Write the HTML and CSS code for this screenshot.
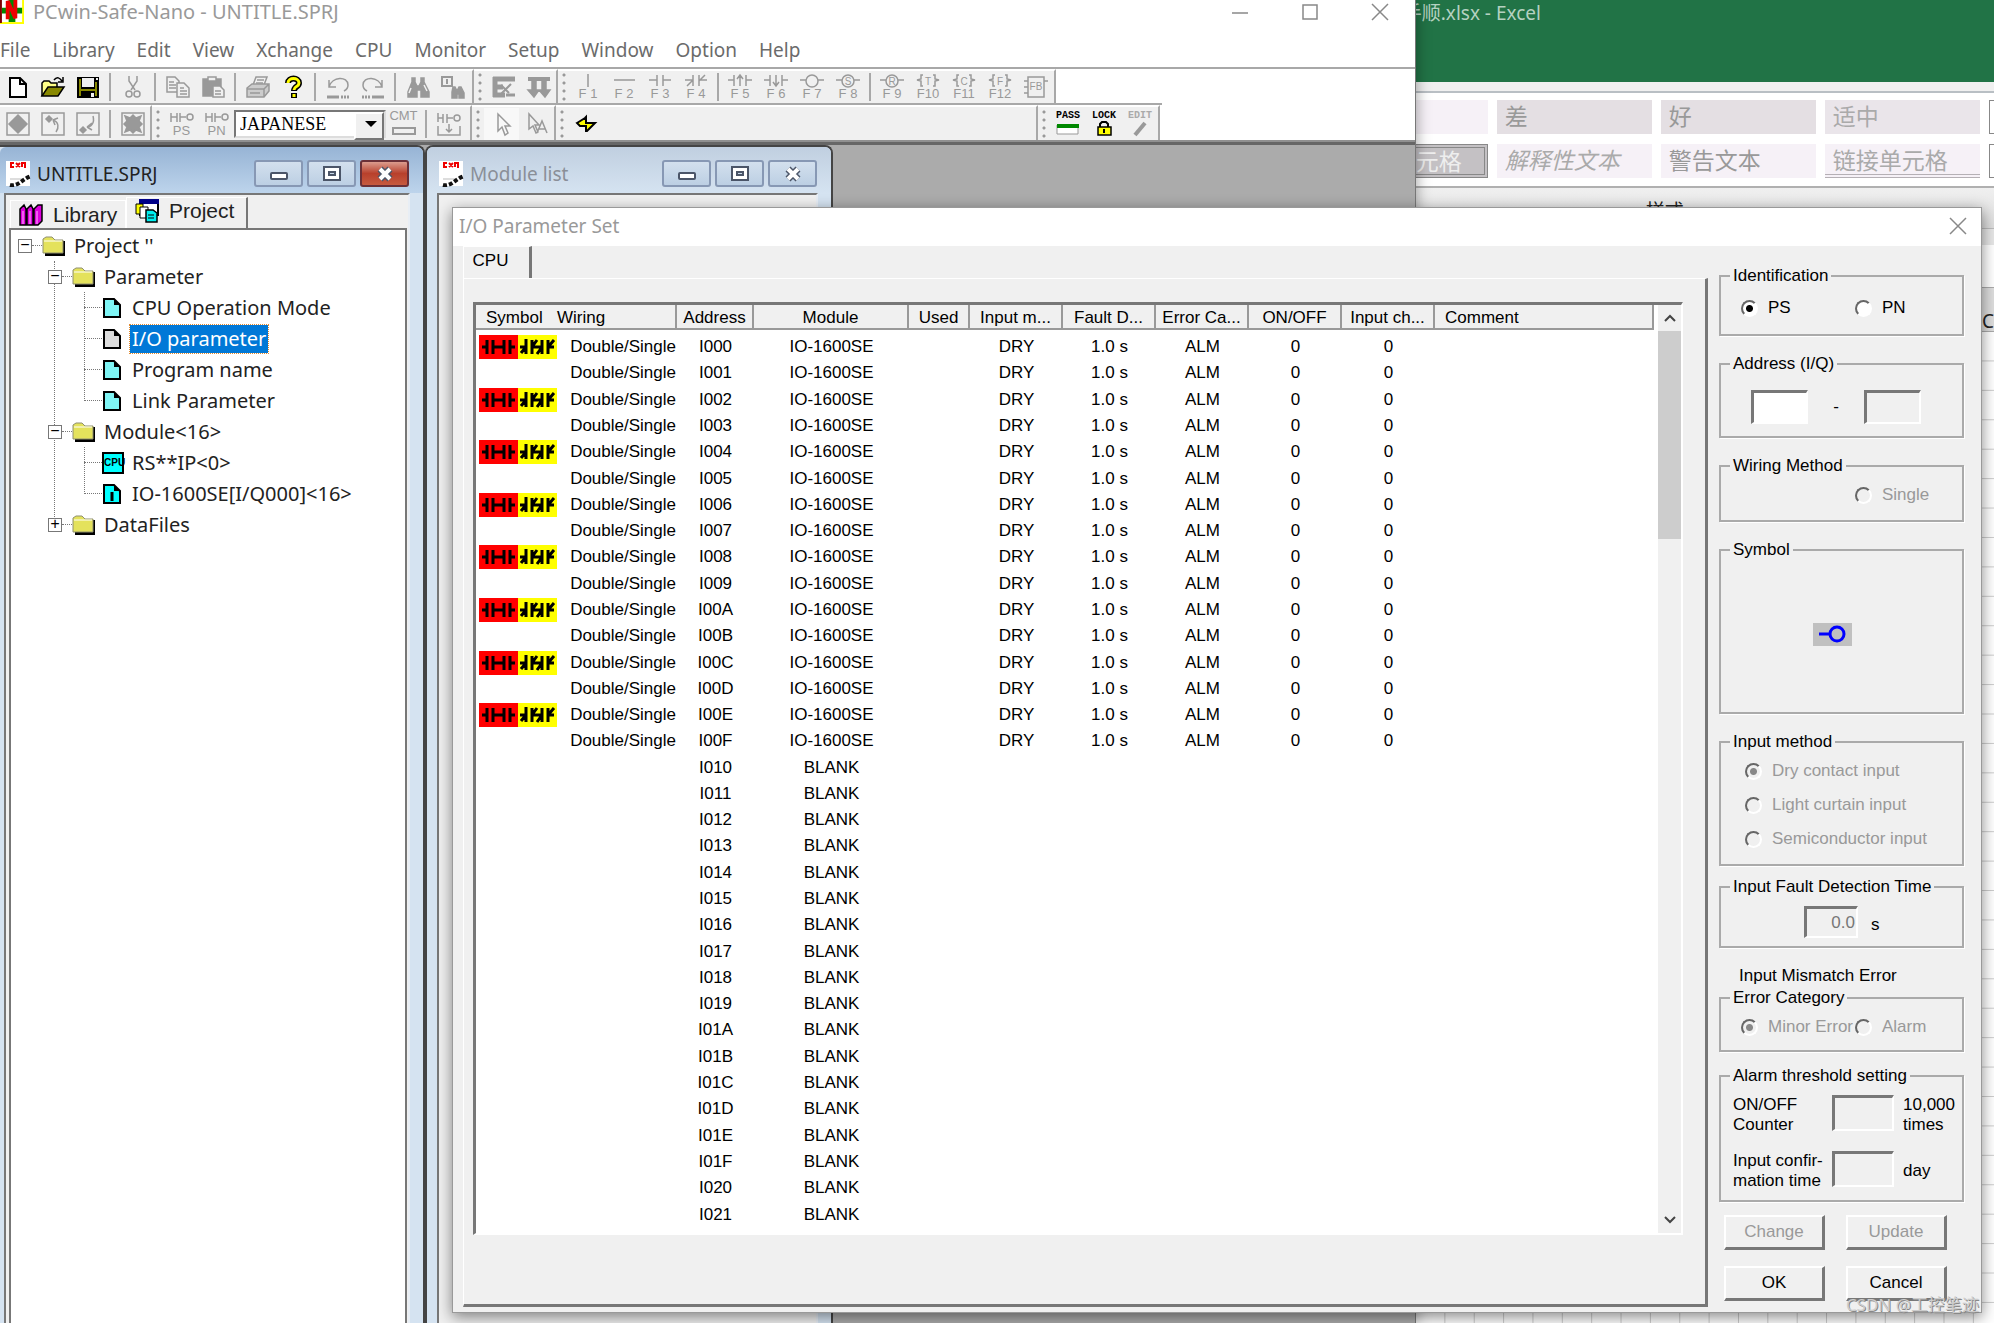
FILE: index.html
```html
<!DOCTYPE html>
<html lang="en">
<head>
<meta charset="utf-8">
<title>PCwin-Safe-Nano - UNTITLE.SPRJ</title>
<link rel="stylesheet" href="styles.css">
</head>
<body>
<svg class="defs" aria-hidden="true">
  <symbol id="doc-frame" viewBox="0 0 26 26"><path fill="#fff" d="M0 0h24v25H0z"/><path fill="none" stroke="#e00" stroke-width="2" d="M8 2H5v4h3M10 2l4 4M14 2l-4 4M19 1v6M19 2h-3v4"/><path stroke="#bbb" d="M4 18h12"/><path fill="none" stroke="#111" stroke-width="4" stroke-dasharray="4 2" d="M4 24c8 2 12-6 21-9"/></symbol>
  <symbol id="i-min" viewBox="0 0 20 16"><rect x="2" y="7" width="16" height="6" rx="1" fill="#fff" stroke="#4b5568" stroke-width="2"/></symbol>
  <symbol id="i-max" viewBox="0 0 20 16"><path fill="#fff" fill-rule="evenodd" stroke="#4b5568" stroke-width="2" d="M2 1h16v13H2zM7 6h6v3H7z"/></symbol>
  <symbol id="i-close" viewBox="0 0 20 16"><path stroke="#4b5568" stroke-width="7" d="M5 3l10 10M15 3L5 13"/><path stroke="#fff" stroke-width="4" d="M5 3l10 10M15 3L5 13"/></symbol>
  <symbol id="i-folder" viewBox="0 0 24 20"><path fill="#000" d="M3 5h20v15H3z"/><path fill="#e4e25c" stroke="#8f8f70" stroke-width="1" d="M1 17V3l3-2h6l3 3h8v13z"/><path stroke="#fff" d="M2 5h18"/></symbol>
  <symbol id="i-page" viewBox="0 0 18 20"><path fill="currentColor" stroke="#000" stroke-width="2" d="M1 1h10l6 6v12H1z"/><path fill="#000" d="M11 1v6h6z"/></symbol>
  <symbol id="i-contact" viewBox="0 0 78 24"><path fill="#f00" d="M0 0h39v24H0z"/><path fill="#ff0" d="M39 0h39v24H39z"/><path stroke="#000" stroke-width="3" d="M3 12h5M8 5v14M14 5v14M14 12h11M25 5v14M31 5v14M31 12h5M41 12h6M47 4v15M53 5v14M53 12h10M63 5v14M69 5v14M69 12h6M53 12l5-7M69 12l6-7M42 18l5-6M58 19l5-7"/></symbol>
</svg>
<div class="desktop">
  <main class="app">
    <header class="titlebar">
      <svg class="app-icon" viewBox="0 0 25 25"><path fill="#ff0" d="M0 0h25v25H0z"/><path fill="#fff" d="M1 0h22v23H1z"/><path fill="#080" d="M9 0h7v23H9zM2 8h21v6H2z"/><path fill="none" stroke="#e00" stroke-width="4" d="M8 20V1l8 18V0"/><path fill="#800000" d="M0 0h2v24H0z"/></svg>
      <h1>PCwin-Safe-Nano - UNTITLE.SPRJ</h1>
      <div class="caption-buttons">
        <button aria-label="Minimize"><svg viewBox="0 0 18 18"><path d="M1 10h16"/></svg></button>
        <button aria-label="Maximize"><svg viewBox="0 0 18 18"><path d="M2 2h14v14H2z"/></svg></button>
        <button aria-label="Close"><svg viewBox="0 0 18 18"><path d="M1 1l16 16M17 1L1 17"/></svg></button>
      </div>
    </header>
    <nav class="menu">
      <a href="#">File</a><a href="#">Library</a><a href="#">Edit</a><a href="#">View</a><a href="#">Xchange</a><a href="#">CPU</a><a href="#">Monitor</a><a href="#">Setup</a><a href="#">Window</a><a href="#">Option</a><a href="#">Help</a>
    </nav>
    <div class="toolrow">
      <div class="tools first">
        <button aria-label="New"><svg viewBox="0 0 24 24"><path fill="#fff" stroke="#000" stroke-width="2" d="M4 3h10l6 6v13H4zM14 3v6h6"/></svg></button>
        <button aria-label="Open"><svg viewBox="0 0 24 24"><path fill="#ff8" stroke="#000" stroke-width="1.500" d="M1 21V8l2-2h5l2 2h6v4"/><path fill="#880" stroke="#000" stroke-width="1.500" d="M1 21l6-9h16l-6 9z"/><path fill="none" stroke="#000" stroke-width="1.500" d="M13 5c3-4 6-2 8 1M22 2v5h-5"/></svg></button>
        <button aria-label="Save"><svg viewBox="0 0 24 24"><path fill="#000" d="M1 2h22v21H1z"/><path fill="#880" d="M3 4h2v17H3zM19 7h2v14h-2zM5 14h14v2H5z"/><path fill="#f0f0f0" d="M6 3h12v9H6zM15 18h3v4h-3zM20 3h2v2h-2z"/></svg></button>
        <i class="sep"></i>
        <button class="g" aria-label="Cut"><svg viewBox="0 0 24 24"><path d="M8 1v5l6 9M16 1v5l-6 9"/><circle cx="8" cy="19" r="3"/><circle cx="16" cy="19" r="3"/></svg></button>
        <i class="sep"></i>
        <button class="g" aria-label="Copy"><svg viewBox="0 0 24 24"><path d="M1 2h8l4 4v11H1zM3 7h5M3 10h7M3 13h7"/><path fill="#f0f0f0" d="M11 8h7l5 5v9H11zM14 13h4M14 16h7M14 19h7"/></svg></button>
        <button class="g" aria-label="Paste"><svg viewBox="0 0 24 24"><path fill="#999" d="M2 4h18v17H2z"/><path fill="#f0f0f0" d="M7 2h8v4H7zM12 11h7l4 4v7H12zM14 16h6M14 19h6"/></svg></button>
        <i class="sep"></i>
        <button class="g" aria-label="Print"><svg viewBox="0 0 24 24"><path d="M7 10l3-8h11l-3 8M11 5h7M10 8h7"/><path fill="#ccc" d="M1 13l5-4h17v7l-5 6H1zM1 14h17v8M18 14l5-5"/><path d="M4 18h10"/></svg></button>
        <button aria-label="Help"><svg viewBox="0 0 24 24"><path fill="none" stroke="#000" stroke-width="6" d="M7 8c0-6 11-6 11 0 0 4-5 3-5 8M13 18v5"/><path fill="none" stroke="#ff0" stroke-width="3" d="M7 8c0-6 11-6 11 0 0 4-5 3-5 7M13 19v3"/></svg></button>
        <i class="sep"></i>
        <button class="g" aria-label="Undo"><svg viewBox="0 0 24 24"><path d="M3 5v7h7M3 12C6 1 22 1 22 10c0 4-2 5-4 6"/><path stroke-width="3" d="M1 22h12m2 0h2m1 0h2m1 0h2"/></svg></button>
        <button class="g" aria-label="Redo"><svg viewBox="0 0 24 24"><path d="M21 5v7h-7M21 12C18 1 2 1 2 10c0 4 2 5 4 6"/><path stroke-width="3" d="M23 22H11m-2 0H7m-1 0H4m-1 0H1"/></svg></button>
        <i class="sep"></i>
        <button class="g" aria-label="Find"><svg viewBox="0 0 24 24"><path fill="#999" d="M6 3h3v4l2 4h2l2-4V3h3v4l5 10v5h-8v-7h-4v7H2v-5L6 7z"/><path stroke="#f0f0f0" d="M5 13l-2 5M18 10l3 6"/></svg></button>
        <button class="g" aria-label="Find next"><svg viewBox="0 0 24 24"><path stroke-width="2" d="M1 2h10v9H1zM6 4v5"/><path fill="#999" d="M12 12h2l2 4 2-4h2l3 6v5h-5v-4h-2v4h-5v-6z"/></svg></button>
      </div>
      <div class="tools">
        <i class="grip"></i>
        <button class="g" aria-label="Upload"><svg viewBox="0 0 24 24"><path stroke-width="5" d="M1 4h22M1 12h10M1 20h12M3 2v20"/><path stroke-width="3" d="M14 20h9"/><path stroke-width="2" d="M9 10l8 8M19 9L8 20"/></svg></button>
        <button class="g" aria-label="Download"><svg viewBox="0 0 24 24"><path stroke-width="4" d="M1 4h22"/><path fill="#999" d="M5 6h4v9h3l-5 7-6-7h4zM15 6h4v9h4l-5 7-6-7h3z"/></svg></button>
      </div>
      <div class="tools fkeys">
        <i class="grip"></i>
        <button><svg viewBox="0 0 24 14"><path d="M12 0v13"/></svg>F 1</button>
        <button><svg viewBox="0 0 24 14"><path d="M2 6h21"/></svg>F 2</button>
        <button><svg viewBox="0 0 24 14"><path d="M1 6h8M9 1v11M15 1v11M15 6h8"/></svg>F 3</button>
        <button><svg viewBox="0 0 24 14"><path d="M1 6h8M9 1v11M15 1v11M15 6h8M9 6l-6 6M15 7l6-6"/></svg>F 4</button>
        <i class="sep"></i>
        <button><svg viewBox="0 0 24 14"><path d="M0 6h6M6 1v11M18 1v11M18 6h6M12 1v11M9 5l3-4 3 4"/></svg>F 5</button>
        <button><svg viewBox="0 0 24 14"><path d="M0 6h6M6 1v11M18 1v11M18 6h6M12 1v11M9 8l3 4 3-4"/></svg>F 6</button>
        <button><svg viewBox="0 0 24 14"><circle cx="12" cy="7" r="6"/><path d="M0 6h6M18 6h6"/></svg>F 7</button>
        <button><svg viewBox="0 0 24 14"><circle cx="12" cy="7" r="6"/><path d="M0 6h6M18 6h6"/><text x="12" y="11">S</text></svg>F 8</button>
        <i class="sep"></i>
        <button><svg viewBox="0 0 24 14"><circle cx="12" cy="7" r="6"/><path d="M0 6h6M18 6h6"/><text x="12" y="11">R</text></svg>F 9</button>
        <button><svg viewBox="0 0 24 14"><path d="M7 1H5v4L1 6l4 1v5h2M17 1h2v4l4 1-4 1v5h-2"/><text x="12" y="11">T</text></svg>F10</button>
        <button><svg viewBox="0 0 24 14"><path d="M7 1H5v4L1 6l4 1v5h2M17 1h2v4l4 1-4 1v5h-2"/><text x="12" y="11">C</text></svg>F11</button>
        <button><svg viewBox="0 0 24 14"><path d="M7 1H5v4L1 6l4 1v5h2M17 1h2v4l4 1-4 1v5h-2"/><text x="12" y="11">F</text></svg>F12</button>
        <button class="g"><svg class="tall" viewBox="0 0 24 24"><path d="M4 2h16v20H4zM0 6h4M0 12h4M0 18h4M20 6h4"/><text x="12" y="15">FB</text></svg></button>
      </div>
    </div>
    <div class="toolrow second">
      <div class="tools first">
        <button class="g" aria-label="Diamond"><svg viewBox="0 0 24 24"><path d="M1 1h22v22H1z"/><path fill="#999" d="M12 3l9 9-9 9-9-9z"/></svg></button>
        <button class="g" aria-label="Jump back"><svg viewBox="0 0 24 24"><path d="M1 1h22v22H1zM12 8c6 2 6 8 3 12M12 8l5-2M12 8l2 5"/><path fill="#999" d="M8 4l3 3-3 3-3-3z"/></svg></button>
        <button class="g" aria-label="Jump forward"><svg viewBox="0 0 24 24"><path d="M1 1h22v22H1zM17 4c2 7-2 11-6 11M11 15l5-4M11 15l5 3"/><path fill="#999" d="M7 15l3 3-3 3-3-3z"/></svg></button>
        <i class="sep"></i>
        <button class="g" aria-label="Burst"><svg viewBox="0 0 24 24"><path d="M1 1h22v22H1z"/><path fill="#999" d="M4 4l5 2 3-3 3 3 5-2-2 5 3 3-3 3 2 5-5-2-3 3-3-3-5 2 2-5-3-3 3-3z"/></svg></button>
      </div>
      <div class="tools modes">
        <i class="grip"></i>
        <button><svg viewBox="0 0 24 14"><path d="M1 2v9M1 6h6M7 2v9M10 2v9M10 6h6"/><circle cx="20" cy="6" r="3"/></svg>PS</button>
        <button><svg viewBox="0 0 24 14"><path d="M1 2v9M1 6h6M7 2v9M10 2v9M10 6h6"/><circle cx="20" cy="6" r="3"/></svg>PN</button>
        <span class="combo"><select aria-label="Language"><option>JAPANESE</option></select></span>
        <button class="cmt">CMT<svg viewBox="0 0 24 10"><path stroke-width="2" d="M1 2h22v6H1z"/></svg></button>
        <i class="sep"></i>
        <button class="g" aria-label="Monitor"><svg viewBox="0 0 24 24"><path d="M1 1v9M1 6h5M6 2v9M10 2v9M10 6h6M1 14v9h22v-9M12 12v8M9 17l3 3 3-3"/><circle cx="20" cy="6" r="3"/></svg></button>
      </div>
      <div class="tools pointer">
        <i class="grip"></i>
        <button class="g pressed" aria-label="Select"><svg viewBox="0 0 24 24"><path d="M8 2v17l4-4 3 8 3-2-3-7h5z"/></svg></button>
        <button class="g" aria-label="Select text"><svg viewBox="0 0 24 24"><path d="M4 2v15l4-3 3 7 2-1-3-7h4zM12 21l5-12 5 12M14 17h6"/></svg></button>
      </div>
      <div class="tools wide">
        <i class="grip"></i>
        <button aria-label="Connect"><svg viewBox="0 0 24 24"><path fill="#ff0" stroke="#000" stroke-width="2" d="M3 11l8-5 1-1v6l9 0-8 8-1 0v-5H6z"/></svg></button>
      </div>
      <div class="tools locks">
        <i class="grip"></i>
        <button>PASS<svg viewBox="0 0 24 14"><path fill="#fff" stroke="#999" d="M1 3h21v9H1z"/><path fill="#080" d="M1 2h22v4H1z"/></svg></button>
        <button>LOCK<svg viewBox="0 0 24 14"><path fill="none" stroke="#000" stroke-width="2" d="M8 5V2l2-2h4l2 2v3"/><path fill="#ff0" stroke="#000" stroke-width="1.500" d="M6 5h13v8H6z"/><path stroke="#000" stroke-width="2" d="M12 7v4"/></svg></button>
        <button class="off">EDIT<svg viewBox="0 0 24 14"><path stroke="#999" stroke-width="4" d="M17 1L7 13"/></svg></button>
      </div>
    </div>
    <section class="mdi">
      <section class="child project active">
        <header>
          <svg class="doc"><use href="#doc-frame"/></svg><h2>UNTITLE.SPRJ</h2>
          <button aria-label="Minimize"><svg><use href="#i-min"/></svg></button>
          <button aria-label="Maximize"><svg><use href="#i-max"/></svg></button>
          <button class="close" aria-label="Close"><svg><use href="#i-close"/></svg></button>
        </header>
        <div class="client">
          <div class="tabs">
            <button class="tab"><svg viewBox="0 0 24 24"><path fill="#d0d" stroke="#000" stroke-width="1.500" d="M1 6l4-4 2 4v16H1zM8 6l4-4 2 4v16H8zM15 6l4-4h4v16l-4 4h-4z"/><path stroke="#fbf" d="M4 8v13M11 8v13M18 8v13"/></svg>Library</button>
            <button class="tab on"><svg viewBox="0 0 24 24"><path fill="#fff" stroke="#000" stroke-width="2" d="M5 1h18v15H5z"/><path fill="#008" d="M4 0h20v5H4z"/><path fill="#ff0" stroke="#000" d="M1 5h7v10H1z"/><path fill="#fff" stroke="#000" d="M5 8h8v11H5z"/><path fill="#0ee" stroke="#000" stroke-width="1.500" d="M11 11h7l4 3v9H11z"/><path stroke="#000" d="M13 16h6M13 19h6"/></svg>Project</button>
          </div>
          <ul class="tree">
            <li><div class="node"><b class="box">−</b><i class="dash"></i><svg class="folder"><use href="#i-folder"/></svg><span>Project ''</span></div>
              <ul>
                <li><div class="node"><b class="box">−</b><i class="dash"></i><svg class="folder"><use href="#i-folder"/></svg><span>Parameter</span></div>
                  <ul class="leafs">
                    <li><div class="node"><i class="dash long"></i><svg class="page"><use href="#i-page"/></svg><span>CPU Operation Mode</span></div></li>
                    <li><div class="node"><i class="dash long"></i><svg class="page grey"><use href="#i-page"/></svg><span class="selected">I/O parameter</span></div></li>
                    <li><div class="node"><i class="dash long"></i><svg class="page"><use href="#i-page"/></svg><span>Program name</span></div></li>
                    <li><div class="node"><i class="dash long"></i><svg class="page"><use href="#i-page"/></svg><span>Link Parameter</span></div></li>
                  </ul></li>
                <li><div class="node"><b class="box">−</b><i class="dash"></i><svg class="folder"><use href="#i-folder"/></svg><span>Module&lt;16&gt;</span></div>
                  <ul class="leafs">
                    <li><div class="node"><i class="dash long"></i><em class="cpu">CPU</em><span>RS**IP&lt;0&gt;</span></div></li>
                    <li><div class="node"><i class="dash long"></i><svg class="page io" viewBox="0 0 18 20"><path fill="#0ff" stroke="#000" stroke-width="2" d="M1 1h10l6 6v12H1z"/><path fill="#000" d="M11 1v6h6z"/><path stroke="#000" stroke-width="3" d="M9 8v9"/></svg><span>IO-1600SE[I/Q000]&lt;16&gt;</span></div></li>
                  </ul></li>
                <li><div class="node"><b class="box">+</b><i class="dash"></i><svg class="folder"><use href="#i-folder"/></svg><span>DataFiles</span></div></li>
              </ul></li>
          </ul>
        </div>
      </section>
      <section class="child modules">
        <header>
          <svg class="doc"><use href="#doc-frame"/></svg><h2>Module list</h2>
          <button aria-label="Minimize"><svg><use href="#i-min"/></svg></button>
          <button aria-label="Maximize"><svg><use href="#i-max"/></svg></button>
          <button aria-label="Close"><svg><use href="#i-close"/></svg></button>
        </header>
        <div class="client"></div>
      </section>
    </section>
  </main>

  <aside class="excel">
    <header>手顺.xlsx - Excel</header>
    <div class="ribbon-top"></div>
    <div class="gallery">
      <span></span><span class="dark">差</span><span class="dark">好</span><span class="mid">适中</span><span class="edge"></span>
      <span class="check">元格</span><span class="note">解释性文本</span><span class="warn">警告文本</span><span class="linked">链接单元格</span><span class="edge"></span>
    </div>
    <div class="ribbon-label">样式</div>
    <div class="formula"></div>
    <div class="colhead">BC</div>
    <div class="sheet"></div>
  </aside>

  <section class="dialog" role="dialog" aria-label="I/O Parameter Set">
    <header><h2>I/O Parameter Set</h2><button aria-label="Close"><svg viewBox="0 0 18 18"><path d="M1 1l16 16M17 1L1 17"/></svg></button></header>
    <div class="dialog-body">
      <div class="tabbed">
        <div class="dtabs"><button>CPU</button></div>
        <div class="panel">
          <div class="list">
            <div class="list-main">
              <table>
                <colgroup><col class="c-sym"><col class="c-wir"><col class="c-adr"><col class="c-mod"><col class="c-use"><col class="c-val"><col class="c-val"><col class="c-val"><col class="c-val"><col class="c-val"><col></colgroup>
                <thead><tr><th class="left nob"><div>Symbol</div></th><th class="left"><div>Wiring</div></th><th><div>Address</div></th><th><div>Module</div></th><th><div>Used</div></th><th><div>Input m...</div></th><th><div>Fault D...</div></th><th><div>Error Ca...</div></th><th><div>ON/OFF</div></th><th><div>Input ch...</div></th><th class="left"><div>Comment</div></th></tr></thead>
                <tbody id="rows"></tbody>
              </table>
            </div>
            <div class="scroll"><svg viewBox="0 0 12 8"><path d="M1 7l5-5 5 5"/></svg><i></i><svg viewBox="0 0 12 8"><path d="M1 1l5 5 5-5"/></svg></div>
          </div>
        </div>
      </div>
      <form class="side" onsubmit="return false">
        <fieldset class="ident"><legend>Identification</legend>
          <div class="pair"><label><input type="radio" name="id" checked>PS</label><label><input type="radio" name="id">PN</label></div></fieldset>
        <fieldset class="addr"><legend>Address (I/Q)</legend>
          <div><input type="text" aria-label="Address from"><span>-</span><input type="text" aria-label="Address to" disabled></div></fieldset>
        <fieldset class="wiring"><legend>Wiring Method</legend>
          <div class="pair"><label class="dis second-col"><input type="radio" name="wm" disabled>Single</label></div></fieldset>
        <fieldset class="symbol"><legend>Symbol</legend>
          <svg viewBox="0 0 39 23"><path fill="#c0c0c0" d="M0 0h39v23H0z"/><path stroke="#00f" stroke-width="3" d="M6 11h11"/><circle cx="24" cy="11" r="7" fill="none" stroke="#00f" stroke-width="3"/></svg></fieldset>
        <fieldset class="method"><legend>Input method</legend>
          <div><label class="dis"><input type="radio" name="im" checked disabled>Dry contact input</label>
          <label class="dis"><input type="radio" name="im" disabled>Light curtain input</label>
          <label class="dis"><input type="radio" name="im" disabled>Semiconductor input</label></div></fieldset>
        <fieldset class="fault"><legend>Input Fault Detection Time</legend>
          <div><input type="text" id="fault" value="0.0" disabled><label for="fault">s</label></div></fieldset>
        <p>Input Mismatch Error</p>
        <fieldset class="category"><legend>Error Category</legend>
          <div class="pair"><label class="dis"><input type="radio" name="ec" checked disabled>Minor Error</label><label class="dis"><input type="radio" name="ec" disabled>Alarm</label></div></fieldset>
        <fieldset class="alarm"><legend>Alarm threshold setting</legend>
          <div><label for="onoff">ON/OFF<br>Counter</label><input type="text" id="onoff" disabled><span>10,000<br>times</span>
          <label for="conf">Input confir-<br>mation time</label><input type="text" id="conf" disabled><span class="day">day</span></div></fieldset>
        <div class="buttons"><button disabled>Change</button><button disabled>Update</button><button>OK</button><button>Cancel</button></div>
      </form>
    </div>
  </section>
  <div class="watermark">CSDN @工控笔迹</div>
</div>
<script src="app.js"></script>
</body>
</html>
```
FILE: app.js
```js
// Fill the I/O list: I000-I00F belong to the input module, the rest is blank.
const icon = '<svg class="contact" viewBox="0 0 78 24"><use href="#i-contact"/></svg>';
let html = '';
for (let i = 0; i <= 0x21; i++) {
  const used = i < 16;
  const address = 'I' + i.toString(16).toUpperCase().padStart(3, '0');
  const cells = used
    ? [i % 2 ? '' : icon, 'Double/Single', address, 'IO-1600SE', '', 'DRY', '1.0 s', 'ALM', '0', '0', '']
    : ['', '', address, 'BLANK', '', '', '', '', '', '', ''];
  html += '<tr>' + cells.map(c => '<td>' + c + '</td>').join('') + '</tr>';
}
document.getElementById('rows').innerHTML = html;
```
FILE: styles.css
```css
* { box-sizing: border-box; }
html, body { height: 100%; margin: 0; }
body {
  --ui: "Noto Sans", "Noto Sans CJK SC", sans-serif;
  --sys: "Liberation Sans", sans-serif;
  font-family: var(--ui);
  font-size: 20px;
  color: #222;
  overflow: hidden;
}
button { font: inherit; color: inherit; background: none; border: 0; padding: 0; }
h1, h2, p, ul { margin: 0; padding: 0; font-size: inherit; font-weight: 400; list-style: none; }
svg { display: block; overflow: visible; }
.defs { position: absolute; width: 0; height: 0; }
.desktop { position: relative; display: flex; height: 100vh; overflow: hidden; }

/* main application window */
.app { flex: 0 0 71%; display: flex; flex-direction: column; background: #fff; border-right: 1px solid #777; z-index: 1; box-shadow: 0 0 14px #0006; }
.titlebar { display: flex; align-items: center; height: 24px; color: #999; }
.app-icon { width: 24px; height: 24px; }
.titlebar h1 { flex: 1; padding-left: 9px; line-height: 24px; }
.caption-buttons { display: flex; gap: 52px; padding-right: 26px; }
.caption-buttons svg, .dialog > header svg { width: 18px; height: 18px; fill: none; stroke: #888; stroke-width: 1.500; }
.menu { display: flex; gap: 22px; height: 45px; font-size: 19px; line-height: 52px; border-bottom: 2px solid #a8a8a8; }
.menu a { color: #6b6b6b; text-decoration: none; }
.toolrow { display: flex; height: 36px; border-bottom: 2px solid #a8a8a8; width: 1162px; }
.toolrow.second { height: 37px; width: auto; border-bottom-color: #909090; }
.tools { display: flex; align-items: center; background: #f0f0f0; border-right: 2px solid #a8a8a8; border-top: 2px solid #fff; }
.tools.first { width: 474px; }
.second .tools.first { width: 152px; }
.tools button { display: flex; flex-direction: column; align-items: center; justify-content: center; flex: 0 0 35px; height: 32px; color: #999; font: 13px/12px "Liberation Sans", sans-serif; }
.tools svg { width: 24px; height: 24px; fill: none; }
.g svg, .fkeys svg, .modes svg { stroke: #999; stroke-width: 1.500; }
.tools svg text { stroke: none; fill: #999; font: 10px "Liberation Sans", sans-serif; text-anchor: middle; }
.sep { flex: 0 0 2px; height: 28px; margin: 0 4px; background: #a8a8a8; }
.grip { flex: 0 0 4px; height: 28px; margin: 0 4px; background: radial-gradient(circle at 2px 2px, #999 1px, transparent 2px) 0 0 / 4px 8px; }
.fkeys button { flex-basis: 36px; }
.fkeys .sep { margin: 0 3px; }
.tools.fkeys svg, .tools.modes button:not(.g) svg { height: 14px; }
.tools.fkeys svg.tall { height: 24px; }
.tools.modes { flex: 0 0 320px; }
.tools.modes .cmt svg { height: 10px; margin-top: 2px; }
.combo { position: relative; flex: 0 0 152px; }
.combo select { appearance: none; display: block; width: 100%; height: 28px; padding: 0 0 0 4px; border: 2px solid #777; border-right-color: #ddd; border-bottom-color: #ddd; border-radius: 0; background: #fff; color: #000; font: 18px/22px "Liberation Serif", serif; }
.combo::before { content: ""; position: absolute; right: 2px; top: 2px; width: 26px; height: 24px; background: #f0f0f0; border: 2px solid; border-color: #fff #777 #777 #fff; pointer-events: none; z-index: 1; }
.combo::after { content: ""; position: absolute; right: 9px; top: 11px; border: 6px solid transparent; border-top-color: #000; border-bottom: 0; pointer-events: none; z-index: 1; }
.pressed { background: #f8f8f8; }
.tools.wide { flex: 0 0 482px; }
.tools.locks { width: 122px; }
.tools.locks button { color: #000; font: bold 10px/10px "Liberation Mono", monospace; flex-basis: 36px; }
.tools.locks .off { color: #aaa; }
.tools.locks svg { height: 14px; margin-top: 1px; }

/* document windows */
.mdi { position: relative; flex: 1; background: #ababab; border-top: 3px solid #666; }
.child { position: absolute; top: 0; bottom: 0; display: flex; flex-direction: column; border: 2px solid #444; border-bottom: 0; border-radius: 8px 8px 0 0; background: #d5e3f1; }
.child.project { left: -2px; width: 427px; border-radius: 0 8px 0 0; }
.child.modules { left: 425px; width: 408px; }
.child > header { display: flex; align-items: center; gap: 4px; height: 46px; padding: 7px 14px 0 12px; background: linear-gradient(#c0cfe0, #d5e3f1); color: #8a8f98; font-size: 19px; border-radius: 6px 6px 0 0; }
.child.active > header { background: linear-gradient(#97b4d5, #bdd4ec); color: #222; padding-left: 6px; }
.doc { width: 26px; height: 26px; }
.child h2 { flex: 1; padding-left: 1px; }
.child > header button { width: 49px; height: 27px; border: 2px solid #8798b4; border-radius: 3px; background: linear-gradient(#d3e0ee, #bccfe3); display: grid; place-items: center; }
.child > header button svg { width: 20px; height: 16px; }
.child > header .close { background: linear-gradient(#dc9c8e, #b8402c 50%, #c65a40); border-color: #6b3038; }
.client { flex: 1; display: flex; flex-direction: column; margin: 0 13px 0 10px; border: 2px solid #777; border-bottom: 0; border-right-color: #e8eef5; background: #f0f0f0; }
.project .client { margin-left: 4px; }
.tabs { display: flex; align-items: flex-end; height: 33px; padding-left: 4px; font: 21px/26px "Liberation Sans", sans-serif; }
.tab { display: flex; align-items: center; gap: 10px; height: 28px; width: 116px; padding: 0 0 0 8px; border: 1px solid #fff; border-bottom: 0; }
.tab.on { height: 31px; width: 122px; border-right: 2px solid #777; padding-bottom: 4px; }
.tab svg { width: 24px; height: 24px; }
.tree { flex: 1; margin: 0 1px 0 3px; padding: 0 0 0 7px; border: solid #777; border-width: 2px 2px 0; background: #fff; }
.node { display: flex; align-items: center; height: 31px; white-space: nowrap; }
.box { width: 14px; height: 14px; border: 1px solid #777; font: 16px/12px "Liberation Mono", monospace; color: #000; text-align: center; }
.dash { width: 10px; border-top: 1px dotted #777; }
.dash.long { width: 18px; }
.folder { width: 24px; height: 20px; }
.page { width: 18px; height: 20px; color: #7ff5f5; margin: 0 3px 0 1px; }
.page.grey { color: #ddd; }
.cpu { width: 22px; height: 22px; border: 2px solid #000; background: #0ff; color: #000; font: bold 10px/18px "Liberation Sans", sans-serif; text-align: center; }
.node span { margin-left: 6px; padding: 0 2px; line-height: 28px; }
.node .selected { background: #0078d7; color: #fff; outline: 1px dotted #e08a30; }
.tree ul { margin-left: 30px; position: relative; }
.tree ul::before { content: ""; position: absolute; left: 6px; top: 0; bottom: 15px; border-left: 1px dotted #777; }
.tree ul .box { position: relative; background: #fff; }
.tree ul.leafs li { padding-left: 6px; }

/* spreadsheet behind */
.excel { flex: 1; display: flex; flex-direction: column; min-width: 0; background: #fff; overflow: hidden; font-size: 19px; }
.excel > header { height: 82px; margin-left: -14px; padding-left: 1px; line-height: 26px; background: #217346; color: #b5d1c1; }
.ribbon-top { height: 11px; background: #f0f0f0; border-bottom: 2px solid #b9bfc4; }
.gallery { display: grid; grid-template-columns: 72px repeat(3, 155px) 1fr; grid-auto-rows: 34px; gap: 10px 9px; height: 95px; padding-top: 7px; border-bottom: 2px solid #b0b0b0; white-space: nowrap; overflow: hidden; }
.gallery span { padding-left: 8px; background: #f6f1f7; color: #aaa; font-size: 23px; line-height: 32px; }
.gallery .dark { background: #e4dfe3; color: #999; }
.gallery .mid { background: #eae5ea; }
.gallery .check { padding: 0; line-height: 26px; background: #c4c1c4; border: 4px double #888; border-left: 0; color: #eee; }
.gallery .note { font-style: italic; }
.gallery .warn { color: #999; }
.gallery .linked { border-bottom: 4px double #b5b0b5; }
.gallery .edge { border: 1px solid #888; background: #fff; }
.ribbon-label { height: 41px; padding: 10px 0 0 230px; background: linear-gradient(#f0f0f0, #ddd); border-bottom: 1px solid #bbb; line-height: 26px; }
.formula { height: 58px; border-top: 16px solid #e6e6e6; }
.colhead { height: 45px; text-align: right; line-height: 66px; background: #ddd; border: solid #aaa; border-width: 1px 0; }
.sheet { flex: 1; background: linear-gradient(to left, #ccc 1px, transparent 1px) 0 0 / 5.080% 100%, linear-gradient(to top, #ccc 1px, transparent 1px) 0 0 / 100% 2.970%; }

/* parameter dialog */
.dialog { position: absolute; left: 452px; right: 12px; top: 207px; bottom: 10px; z-index: 2; display: flex; flex-direction: column; border: 1px solid #999; background: #f0f0f0; box-shadow: 0 4px 14px #0007; font: 17px/20px var(--sys); color: #000; }
.dialog > header { display: flex; align-items: center; justify-content: space-between; height: 38px; padding: 0 14px 2px 6px; background: #fff; color: #999; font: 19px/36px var(--ui); }
.dialog-body { flex: 1; display: flex; padding: 0 17px 5px 10px; gap: 11px; }
.tabbed { flex: 1; display: flex; flex-direction: column; min-width: 0; }
.dtabs { height: 32px; }
.dtabs button { height: 32px; width: 69px; padding: 0 12px 4px 0; border: 1px solid #fff; border-bottom: 0; border-right: 3px solid #777; }
.panel { flex: 1; display: flex; padding: 23px 22px 69px 9px; border: solid #777; border-width: 1px 3px 3px 1px; border-top-color: #fff; border-left-color: #fff; }
.list { flex: 1; display: flex; background: #fff; border: solid #777; border-width: 3px 2px 2px 3px; border-right-color: #fff; border-bottom-color: #fff; }
.list-main { flex: 1; padding-bottom: 5px; }
table { width: 100%; height: 100%; table-layout: fixed; border-collapse: collapse; }
.c-sym { width: 80px; } .c-wir { width: 121px; } .c-adr { width: 77px; } .c-mod { width: 155px; } .c-use { width: 61px; } .c-val { width: 93px; }
th { height: 29px; padding: 0 0 4px; font-weight: 400; }
th div { height: 25px; line-height: 26px; background: #f0f0f0; border: solid #999; border-width: 0 2px 2px 0; white-space: nowrap; overflow: hidden; }
th.left div { text-align: left; padding-left: 10px; }
th.left + th.left div { padding-left: 1px; }
th.nob div { border-right: 0; }
td { height: 24px; padding: 0; text-align: center; white-space: nowrap; line-height: 24px; }
td:nth-child(2) { text-align: right; padding-right: 1px; }
.contact { width: 78px; height: 24px; margin-left: 3px; }
.scroll { width: 27px; display: flex; flex-direction: column; align-items: center; background: #f0f0f0; border-left: 4px solid #fff; }
.scroll svg { width: 12px; height: 26px; fill: none; stroke: #444; stroke-width: 2; }
.scroll i { width: 100%; height: 208px; margin-bottom: auto; background: #cdcdcd; }

.side { flex: 0 0 245px; min-width: 0; display: flex; flex-direction: column; padding-top: 20px; white-space: nowrap; }
fieldset { min-width: 0; margin: 0 0 18px; padding: 0 9px; border: 2px solid #aaa; box-shadow: 1px 1px #fff; }
fieldset > div { display: flex; padding: 9px 0 0 3px; }
legend { padding: 0 3px; }
.side label { display: flex; align-items: center; gap: 10px; height: 20px; }
.side .dis { color: #999; }
input[type=radio] { appearance: none; flex: 0 0 17px; width: 17px; height: 17px; margin: 0; border: 2px solid; border-color: #666 #fff #fff #666; border-radius: 50%; background: #fff; }
input[type=radio]:checked { background: radial-gradient(#000 3px, #fff 4px); }
input[type=radio]:disabled { background: #f0f0f0; }
input[type=radio]:checked:disabled { background: radial-gradient(#888 3px, #f0f0f0 4px); }
input[type=text] { width: 57px; height: 34px; margin: 0; padding: 0 1px; border: solid #777; border-width: 3px 2px 2px 3px; border-right-color: #fff; border-bottom-color: #fff; border-radius: 0; background: #fff; font: inherit; text-align: right; }
input[type=text]:disabled { background: #f0f0f0; color: #777; }
.pair { display: grid !important; grid-template-columns: 114px 1fr; padding-left: 11px !important; }
.pair .second-col { grid-column: 2; }
.ident { height: 70px; }
.ident .pair { padding-top: 12px; }
.addr { height: 84px; }
.addr div { padding: 16px 0 0 21px; align-items: center; }
.addr span { width: 56px; text-align: center; }
.wiring { height: 66px; }
.symbol { height: 174px; }
.symbol svg { width: 39px; height: 23px; margin: 63px 0 0 83px; }
.method { height: 134px; margin-bottom: 11px; }
.method div { flex-direction: column; gap: 14px; padding-left: 15px; }
.fault { height: 71px; }
.fault div { gap: 13px; padding-left: 74px; }
.fault input { width: 54px; height: 32px; }
.fault label { height: 38px; }
.side p { padding: 0 0 2px 20px; }
.category { height: 64px; margin-bottom: 14px; }
.alarm { height: 136px; margin-bottom: 13px; }
.alarm div { display: grid; grid-template-columns: 90px 62px 1fr; gap: 16px 9px; align-items: start; }
.alarm label { display: block; height: 40px; }
.alarm input { width: 62px; height: 36px; }
.alarm .day { align-self: center; }
.buttons { display: grid; grid-template-columns: 101px 101px; gap: 16px 21px; padding-left: 5px; }
.buttons button { height: 35px; border: solid #777; border-width: 2px 3px 3px 2px; border-top-color: #fff; border-left-color: #fff; }
.buttons button:disabled { color: #999; }
.watermark { position: absolute; right: 15px; bottom: 6px; z-index: 3; font-size: 17px; line-height: 24px; color: #ccc; text-shadow: 1px 1px #888; }
```
